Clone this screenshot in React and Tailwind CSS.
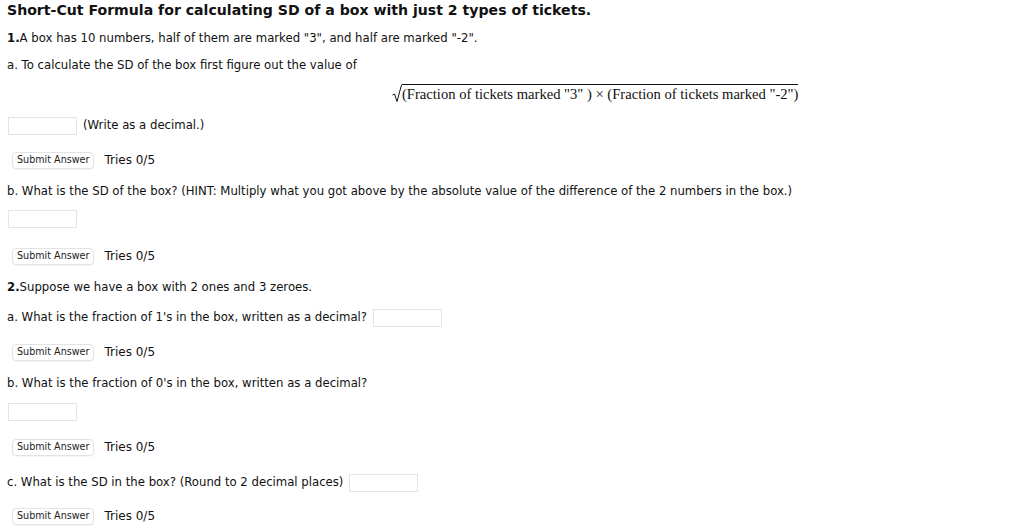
function Submit() {
  return (
    <div className="ml-[5px] flex items-center">
      <button
        type="button"
        className="h-[17px] rounded-[4px] border border-[#e3e3e3] bg-white px-[4px] text-[9.6px] leading-none text-[#222] shadow-[0_1px_1px_rgba(0,0,0,0.04)]"
      >
        Submit Answer
      </button>
      <span className="ml-[10px] text-[12px] text-[#111]">Tries 0/5</span>
    </div>
  );
}

function Field({ className = '' }) {
  return <span className={`inline-block h-[18px] w-[69px] border border-[#e4e4e4] bg-white ${className}`} />;
}

export default function App() {
  return (
    <div
      className="h-[528px] w-[1024px] overflow-hidden bg-white pl-[7px] text-[11.7px] text-[#111]"
      style={{ fontFamily: '"DejaVu Sans", Verdana, sans-serif' }}
    >
      <div className="flex h-5 items-center pt-px text-[14.1px] font-bold">
        Short-Cut Formula for calculating SD of a box with just 2 types of tickets.
      </div>
      <div className="mt-[9px] flex h-5 items-center">
        <b>1.</b>A box has 10 numbers, half of them are marked "3", and half are marked "-2".
      </div>
      <div className="mt-[7px] flex h-5 items-center">a. To calculate the SD of the box first figure out the value of</div>
      <div className="mt-[7px] flex h-5 items-center pl-[385px]" style={{ fontFamily: '"Liberation Serif", "Times New Roman", serif' }}>
        <svg width="10" height="19" viewBox="0 0 10 19" className="shrink-0">
          <path d="M0.5 11 L2.5 10 L5 17.5 L9.5 1 L10 1" fill="none" stroke="#111" strokeWidth="1" />
        </svg>
        <span className="border-t border-[#111] pt-[1px] text-[14.6px] leading-[16px] whitespace-nowrap">
          (Fraction of tickets marked "3" ) × (Fraction of tickets marked "-2")
        </span>
      </div>
      <div className="mt-[13px] flex h-5 items-center">
        <Field className="ml-[1px]" />
        <span className="ml-[6px]">(Write as a decimal.)</span>
      </div>
      <div className="mt-[14px] flex h-5 items-center">
        <Submit />
      </div>
      <div className="mt-[12px] flex h-5 items-center">
        b. What is the SD of the box? (HINT: Multiply what you got above by the absolute value of the difference of the 2
        numbers in the box.)
      </div>
      <div className="mt-[7px] flex h-5 items-center">
        <Field className="ml-[1px]" />
      </div>
      <div className="mt-[17px] flex h-5 items-center">
        <Submit />
      </div>
      <div className="mt-[12px] flex h-5 items-center">
        <b>2.</b>Suppose we have a box with 2 ones and 3 zeroes.
      </div>
      <div className="mt-[10px] flex h-5 items-center">
        a. What is the fraction of 1's in the box, written as a decimal?
        <Field className="ml-[6px]" />
      </div>
      <div className="mt-[14px] flex h-5 items-center">
        <Submit />
      </div>
      <div className="mt-[12px] flex h-5 items-center">b. What is the fraction of 0's in the box, written as a decimal?</div>
      <div className="mt-[8px] flex h-5 items-center">
        <Field className="ml-[1px]" />
      </div>
      <div className="mt-[15px] flex h-5 items-center">
        <Submit />
      </div>
      <div className="mt-[16px] flex h-5 items-center">
        c. What is the SD in the box? (Round to 2 decimal places)
        <Field className="ml-[6px]" />
      </div>
      <div className="mt-[13px] flex h-5 items-center">
        <Submit />
      </div>
    </div>
  );
}
